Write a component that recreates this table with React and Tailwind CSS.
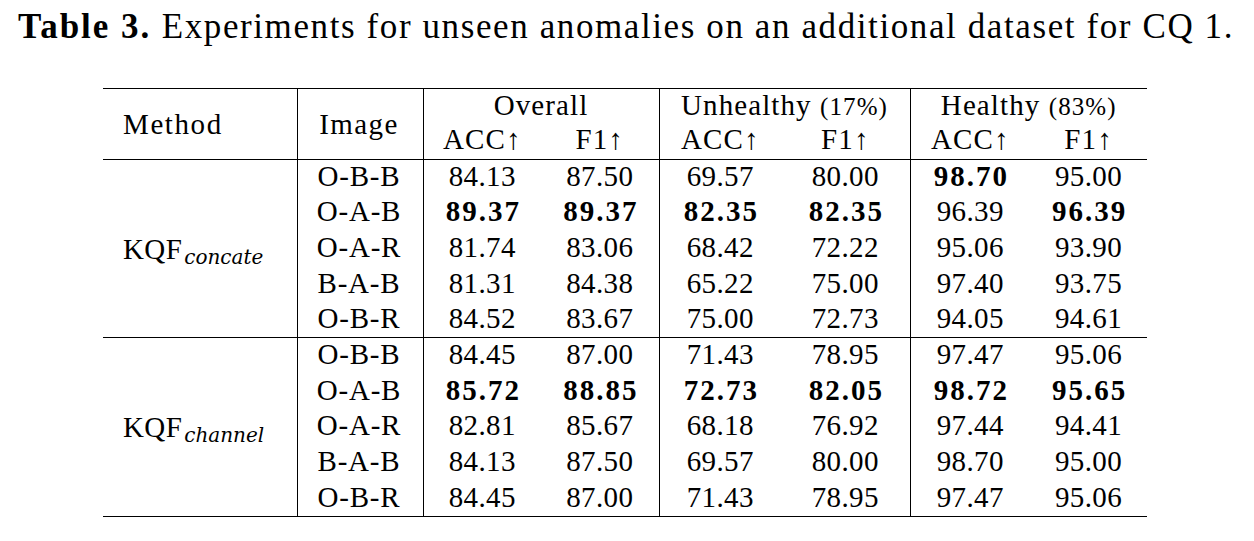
import React from "react";

const groups = [
  {
    sub: "concate",
    rows: [
      ["O-B-B", ["84.13", "87.50", "69.57", "80.00", "*98.70", "95.00"]],
      ["O-A-B", ["*89.37", "*89.37", "*82.35", "*82.35", "96.39", "*96.39"]],
      ["O-A-R", ["81.74", "83.06", "68.42", "72.22", "95.06", "93.90"]],
      ["B-A-B", ["81.31", "84.38", "65.22", "75.00", "97.40", "93.75"]],
      ["O-B-R", ["84.52", "83.67", "75.00", "72.73", "94.05", "94.61"]],
    ],
  },
  {
    sub: "channel",
    rows: [
      ["O-B-B", ["84.45", "87.00", "71.43", "78.95", "97.47", "95.06"]],
      ["O-A-B", ["*85.72", "*88.85", "*72.73", "*82.05", "*98.72", "*95.65"]],
      ["O-A-R", ["82.81", "85.67", "68.18", "76.92", "97.44", "94.41"]],
      ["B-A-B", ["84.13", "87.50", "69.57", "80.00", "98.70", "95.00"]],
      ["O-B-R", ["84.45", "87.00", "71.43", "78.95", "97.47", "95.06"]],
    ],
  },
];

function Val({ v }) {
  if (v.startsWith("*")) {
    return <span className="font-bold tracking-[2px] pl-[2px]">{v.slice(1)}</span>;
  }
  return <span>{v}</span>;
}

export default function App() {
  return (
    <div className="w-[1254px] h-[541px] bg-white overflow-hidden text-black font-['Liberation_Serif',serif]">
      <p className="pl-[18px] pt-[7px] text-[35px] leading-[40px] tracking-[1.6px] whitespace-nowrap">
        <span className="font-bold tracking-[2px]">Table 3.</span> Experiments for unseen anomalies on an additional dataset for CQ 1.
      </p>
      <div className="pl-[103px] pt-[41px]">
        <table className="border-collapse table-fixed w-[1044px] text-[29px] leading-[30px] tracking-[0.4px]">
          <colgroup>
            <col className="w-[194px]" />
            <col className="w-[126px]" />
            <col className="w-[118px]" />
            <col className="w-[118px]" />
            <col className="w-[122px]" />
            <col className="w-[129px]" />
            <col className="w-[120px]" />
            <col className="w-[117px]" />
          </colgroup>
          <thead className="tracking-[1.1px]">
            <tr className="h-[35px] border-t border-black">
              <th rowSpan={2} className="p-0 pl-[20px] text-left font-normal align-middle border-r border-black tracking-[1.6px]">
                Method
              </th>
              <th rowSpan={2} className="p-0 pr-[2px] text-center font-normal align-middle border-r border-black tracking-[1.4px]">
                Image
              </th>
              <th colSpan={2} className="p-0 pt-[1px] text-center font-normal align-top border-r border-black">
                Overall
              </th>
              <th colSpan={2} className="p-0 pt-[1px] text-center font-normal align-top border-r border-black">
                Unhealthy <span className="text-[25px]">(17%)</span>
              </th>
              <th colSpan={2} className="p-0 pt-[1px] text-center font-normal align-top">
                Healthy <span className="text-[25px]">(83%)</span>
              </th>
            </tr>
            <tr className="h-[36px] border-b border-black">
              <th className="p-0 text-center font-normal align-top">ACC↑</th>
              <th className="p-0 text-center font-normal align-top border-r border-black">F1↑</th>
              <th className="p-0 text-center font-normal align-top">ACC↑</th>
              <th className="p-0 text-center font-normal align-top border-r border-black">F1↑</th>
              <th className="p-0 text-center font-normal align-top">ACC↑</th>
              <th className="p-0 text-center font-normal align-top">F1↑</th>
            </tr>
          </thead>
          {groups.map((g, gi) => (
            <tbody key={gi} className="border-b border-black">
              {g.rows.map((r, ri) => (
                <tr key={ri} className="h-[35.7px]">
                  {ri === 0 && (
                    <td rowSpan={5} className="p-0 pl-[20px] text-left align-middle border-r border-black whitespace-nowrap">
                      KQF<sub className="italic text-[20px] tracking-normal font-['DejaVu_Serif',serif] pl-[2px]">{g.sub}</sub>
                    </td>
                  )}
                  <td className="p-0 pt-[1px] pr-[2px] text-center align-top border-r border-black tracking-[0.8px]">{r[0]}</td>
                  {r[1].map((v, vi) => (
                    <td
                      key={vi}
                      className={
                        vi === 1 || vi === 3
                          ? "p-0 pt-[1px] text-center align-top border-r border-black"
                          : "p-0 pt-[1px] text-center align-top"
                      }
                    >
                      <Val v={v} />
                    </td>
                  ))}
                </tr>
              ))}
            </tbody>
          ))}
        </table>
      </div>
    </div>
  );
}
